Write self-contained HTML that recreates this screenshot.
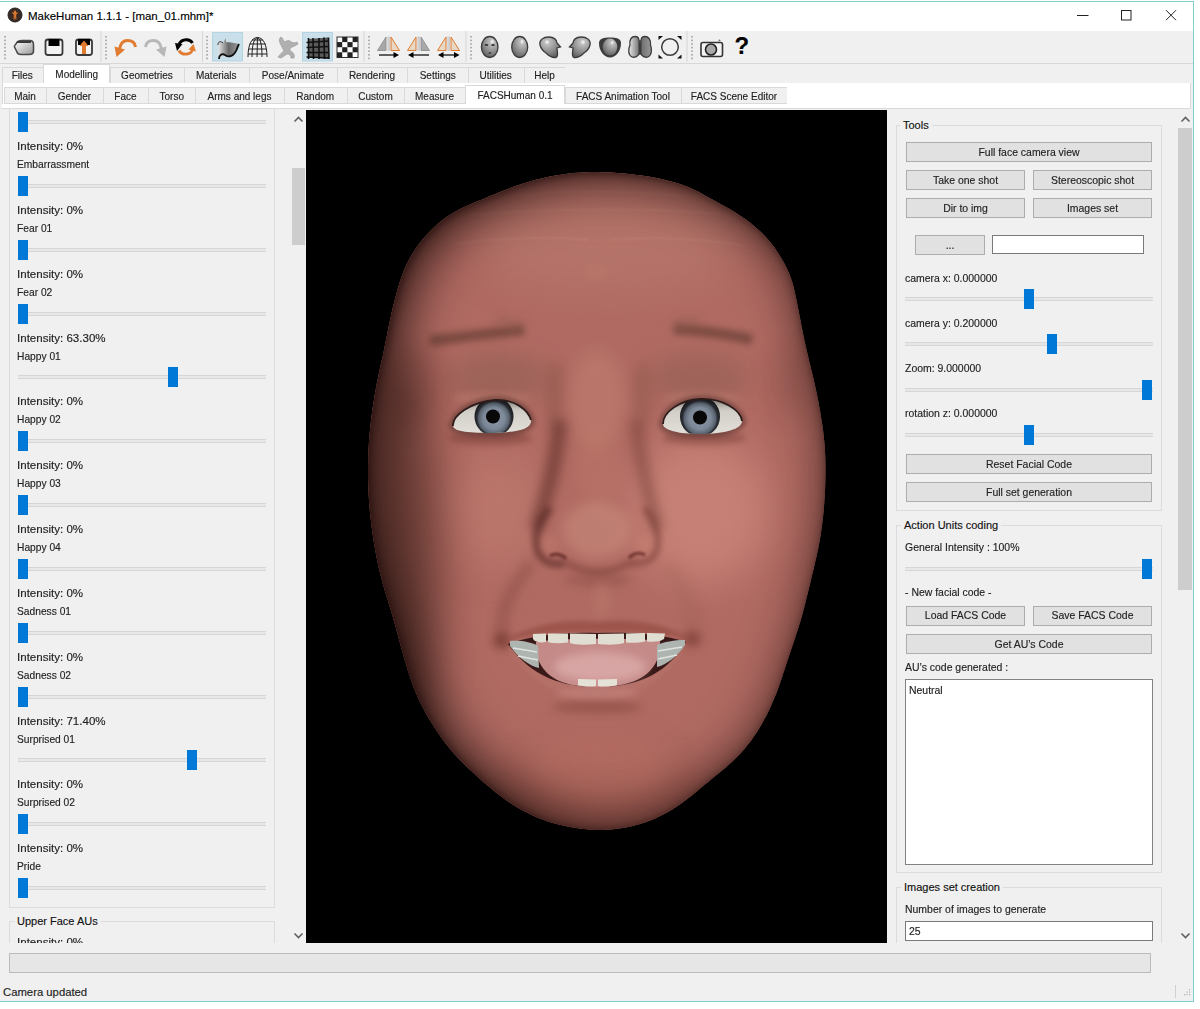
<!DOCTYPE html><html><head><meta charset="utf-8"><style>
html,body{margin:0;padding:0;}
body{width:1200px;height:1009px;position:relative;overflow:hidden;background:#fff;font-family:"Liberation Sans",sans-serif;}
.t{position:absolute;white-space:nowrap;line-height:1;font-family:"Liberation Sans",sans-serif;color:#111;-webkit-text-stroke:0.15px currentColor;}
.b{position:absolute;}
</style></head><body>
<div class="b" style="left:0px;top:1px;width:1194px;height:1001px;background:#f0f0f0;"></div>
<div class="b" style="left:0px;top:1px;width:1194px;height:30px;background:#fff;"></div>
<svg class="b" style="left:7px;top:7px" width="16" height="16"><circle cx="8" cy="8" r="7" fill="#3a2a24" stroke="#222" stroke-width="1"/><path d="M8 3.5 C9.2 3.5 9.4 4.8 9 5.6 L10.8 5.4 L10.6 6.6 L9.2 7.4 L9.4 12.5 L8.4 12.5 L8 9.5 L7.6 12.5 L6.6 12.5 L6.8 7.4 L5.4 6.6 L5.2 5.4 L7 5.6 C6.6 4.8 6.8 3.5 8 3.5 Z" fill="#d8782e"/></svg>
<div class="t" style="left:28px;top:10.5px;font-size:11.5px;color:#000;">MakeHuman 1.1.1 - [man_01.mhm]*</div>
<div class="b" style="left:0px;top:31px;width:1194px;height:32px;background:#f0f0f0;"></div>
<div class="b" style="left:0px;top:63px;width:1194px;height:1px;background:#d8d8d8;"></div>
<div class="b" style="left:0px;top:64px;width:1194px;height:22px;background:#f0f0f0;"></div>
<div class="b" style="left:2px;top:67px;width:40.5px;height:17px;background:#f0f0f0;border:1px solid #d9d9d9;border-right:none;box-sizing:border-box;"></div>
<div class="t" style="left:2px;width:40.5px;text-align:center;top:70.4px;font-size:11px;color:#222;transform:scaleX(0.91);transform-origin:50% 0;">Files</div>
<div class="b" style="left:42.5px;top:64px;width:67.5px;height:22px;background:#fff;border:1px solid #d9d9d9;border-bottom:none;box-sizing:border-box;"></div>
<div class="t" style="left:42.5px;width:67.5px;text-align:center;top:69.4px;font-size:11px;color:#222;transform:scaleX(0.91);transform-origin:50% 0;">Modelling</div>
<div class="b" style="left:110px;top:67px;width:74px;height:17px;background:#f0f0f0;border:1px solid #d9d9d9;border-right:none;box-sizing:border-box;"></div>
<div class="t" style="left:110px;width:74px;text-align:center;top:70.4px;font-size:11px;color:#222;transform:scaleX(0.91);transform-origin:50% 0;">Geometries</div>
<div class="b" style="left:184px;top:67px;width:64.5px;height:17px;background:#f0f0f0;border:1px solid #d9d9d9;border-right:none;box-sizing:border-box;"></div>
<div class="t" style="left:184px;width:64.5px;text-align:center;top:70.4px;font-size:11px;color:#222;transform:scaleX(0.91);transform-origin:50% 0;">Materials</div>
<div class="b" style="left:248.5px;top:67px;width:88.0px;height:17px;background:#f0f0f0;border:1px solid #d9d9d9;border-right:none;box-sizing:border-box;"></div>
<div class="t" style="left:248.5px;width:88.0px;text-align:center;top:70.4px;font-size:11px;color:#222;transform:scaleX(0.91);transform-origin:50% 0;">Pose/Animate</div>
<div class="b" style="left:336.5px;top:67px;width:70.0px;height:17px;background:#f0f0f0;border:1px solid #d9d9d9;border-right:none;box-sizing:border-box;"></div>
<div class="t" style="left:336.5px;width:70.0px;text-align:center;top:70.4px;font-size:11px;color:#222;transform:scaleX(0.91);transform-origin:50% 0;">Rendering</div>
<div class="b" style="left:406.5px;top:67px;width:61.5px;height:17px;background:#f0f0f0;border:1px solid #d9d9d9;border-right:none;box-sizing:border-box;"></div>
<div class="t" style="left:406.5px;width:61.5px;text-align:center;top:70.4px;font-size:11px;color:#222;transform:scaleX(0.91);transform-origin:50% 0;">Settings</div>
<div class="b" style="left:468px;top:67px;width:55.5px;height:17px;background:#f0f0f0;border:1px solid #d9d9d9;border-right:none;box-sizing:border-box;"></div>
<div class="t" style="left:468px;width:55.5px;text-align:center;top:70.4px;font-size:11px;color:#222;transform:scaleX(0.91);transform-origin:50% 0;">Utilities</div>
<div class="b" style="left:523.5px;top:67px;width:41.0px;height:17px;background:#f0f0f0;border:1px solid #d9d9d9;border-right:none;box-sizing:border-box;"></div>
<div class="t" style="left:523.5px;width:41.0px;text-align:center;top:70.4px;font-size:11px;color:#222;transform:scaleX(0.91);transform-origin:50% 0;">Help</div>
<div class="b" style="left:2px;top:84px;width:1189px;height:2px;background:#fff;"></div>
<div class="b" style="left:564px;top:83px;width:627px;height:1px;background:#d9d9d9;"></div>
<div class="b" style="left:2px;top:83px;width:1189px;height:26px;background:#fff;border:1px solid #d9d9d9;border-top:none;border-bottom:none;box-sizing:border-box;"></div>
<div class="b" style="left:3.5px;top:87px;width:42.0px;height:17px;background:#f0f0f0;border:1px solid #d9d9d9;border-right:none;box-sizing:border-box;"></div>
<div class="t" style="left:3.5px;width:42.0px;text-align:center;top:90.9px;font-size:11px;color:#222;transform:scaleX(0.91);transform-origin:50% 0;">Main</div>
<div class="b" style="left:45.5px;top:87px;width:57.0px;height:17px;background:#f0f0f0;border:1px solid #d9d9d9;border-right:none;box-sizing:border-box;"></div>
<div class="t" style="left:45.5px;width:57.0px;text-align:center;top:90.9px;font-size:11px;color:#222;transform:scaleX(0.91);transform-origin:50% 0;">Gender</div>
<div class="b" style="left:102.5px;top:87px;width:45.0px;height:17px;background:#f0f0f0;border:1px solid #d9d9d9;border-right:none;box-sizing:border-box;"></div>
<div class="t" style="left:102.5px;width:45.0px;text-align:center;top:90.9px;font-size:11px;color:#222;transform:scaleX(0.91);transform-origin:50% 0;">Face</div>
<div class="b" style="left:147.5px;top:87px;width:47.5px;height:17px;background:#f0f0f0;border:1px solid #d9d9d9;border-right:none;box-sizing:border-box;"></div>
<div class="t" style="left:147.5px;width:47.5px;text-align:center;top:90.9px;font-size:11px;color:#222;transform:scaleX(0.91);transform-origin:50% 0;">Torso</div>
<div class="b" style="left:195px;top:87px;width:89px;height:17px;background:#f0f0f0;border:1px solid #d9d9d9;border-right:none;box-sizing:border-box;"></div>
<div class="t" style="left:195px;width:89px;text-align:center;top:90.9px;font-size:11px;color:#222;transform:scaleX(0.91);transform-origin:50% 0;">Arms and legs</div>
<div class="b" style="left:284px;top:87px;width:62.5px;height:17px;background:#f0f0f0;border:1px solid #d9d9d9;border-right:none;box-sizing:border-box;"></div>
<div class="t" style="left:284px;width:62.5px;text-align:center;top:90.9px;font-size:11px;color:#222;transform:scaleX(0.91);transform-origin:50% 0;">Random</div>
<div class="b" style="left:346.5px;top:87px;width:57.0px;height:17px;background:#f0f0f0;border:1px solid #d9d9d9;border-right:none;box-sizing:border-box;"></div>
<div class="t" style="left:346.5px;width:57.0px;text-align:center;top:90.9px;font-size:11px;color:#222;transform:scaleX(0.91);transform-origin:50% 0;">Custom</div>
<div class="b" style="left:403.5px;top:87px;width:61.0px;height:17px;background:#f0f0f0;border:1px solid #d9d9d9;border-right:none;box-sizing:border-box;"></div>
<div class="t" style="left:403.5px;width:61.0px;text-align:center;top:90.9px;font-size:11px;color:#222;transform:scaleX(0.91);transform-origin:50% 0;">Measure</div>
<div class="b" style="left:464.5px;top:85px;width:100.0px;height:23px;background:#fff;border:1px solid #d9d9d9;border-bottom:none;box-sizing:border-box;"></div>
<div class="t" style="left:464.5px;width:100.0px;text-align:center;top:90.4px;font-size:11px;color:#222;transform:scaleX(0.91);transform-origin:50% 0;">FACSHuman 0.1</div>
<div class="b" style="left:564.5px;top:87px;width:116.0px;height:17px;background:#f0f0f0;border:1px solid #d9d9d9;border-right:none;box-sizing:border-box;"></div>
<div class="t" style="left:564.5px;width:116.0px;text-align:center;top:90.9px;font-size:11px;color:#222;transform:scaleX(0.91);transform-origin:50% 0;">FACS Animation Tool</div>
<div class="b" style="left:680.5px;top:87px;width:106.0px;height:17px;background:#f0f0f0;border:1px solid #d9d9d9;border-right:none;box-sizing:border-box;"></div>
<div class="t" style="left:680.5px;width:106.0px;text-align:center;top:90.9px;font-size:11px;color:#222;transform:scaleX(0.91);transform-origin:50% 0;">FACS Scene Editor</div>
<div class="b" style="left:2px;top:108px;width:1189px;height:1px;background:#d9d9d9;"></div>
<div class="b" style="left:0px;top:109px;width:1193px;height:892px;background:#f0f0f0;"></div>
<div class="b" style="left:0;top:109px;width:306px;height:834px;overflow:hidden;">
<div class="b" style="left:9px;top:-49px;width:266px;height:848px;border:1px solid #dcdcdc;box-sizing:border-box;"></div>
<div class="b" style="left:18px;top:11px;width:248px;height:4px;background:#e7e7e7;border-top:1px solid #d6d6d6;border-bottom:1px solid #d6d6d6;box-sizing:border-box;"></div>
<div class="b" style="left:18px;top:3px;width:10px;height:20px;background:#0078d7;"></div>
<div class="t" style="left:17px;top:31.9px;font-size:11px;color:#222;transform:scaleX(1.05);transform-origin:0 0;">Intensity: 0%</div>
<div class="t" style="left:17px;top:49.9px;font-size:11px;color:#222;transform:scaleX(0.93);transform-origin:0 0;">Embarrassment</div>
<div class="b" style="left:18px;top:75px;width:248px;height:4px;background:#e7e7e7;border-top:1px solid #d6d6d6;border-bottom:1px solid #d6d6d6;box-sizing:border-box;"></div>
<div class="b" style="left:18px;top:67px;width:10px;height:20px;background:#0078d7;"></div>
<div class="t" style="left:17px;top:95.9px;font-size:11px;color:#222;transform:scaleX(1.05);transform-origin:0 0;">Intensity: 0%</div>
<div class="t" style="left:17px;top:113.9px;font-size:11px;color:#222;transform:scaleX(0.93);transform-origin:0 0;">Fear 01</div>
<div class="b" style="left:18px;top:139px;width:248px;height:4px;background:#e7e7e7;border-top:1px solid #d6d6d6;border-bottom:1px solid #d6d6d6;box-sizing:border-box;"></div>
<div class="b" style="left:18px;top:131px;width:10px;height:20px;background:#0078d7;"></div>
<div class="t" style="left:17px;top:159.9px;font-size:11px;color:#222;transform:scaleX(1.05);transform-origin:0 0;">Intensity: 0%</div>
<div class="t" style="left:17px;top:177.9px;font-size:11px;color:#222;transform:scaleX(0.93);transform-origin:0 0;">Fear 02</div>
<div class="b" style="left:18px;top:203px;width:248px;height:4px;background:#e7e7e7;border-top:1px solid #d6d6d6;border-bottom:1px solid #d6d6d6;box-sizing:border-box;"></div>
<div class="b" style="left:18px;top:195px;width:10px;height:20px;background:#0078d7;"></div>
<div class="t" style="left:17px;top:223.9px;font-size:11px;color:#222;transform:scaleX(1.05);transform-origin:0 0;">Intensity: 63.30%</div>
<div class="t" style="left:17px;top:241.9px;font-size:11px;color:#222;transform:scaleX(0.93);transform-origin:0 0;">Happy 01</div>
<div class="b" style="left:18px;top:266px;width:248px;height:4px;background:#e7e7e7;border-top:1px solid #d6d6d6;border-bottom:1px solid #d6d6d6;box-sizing:border-box;"></div>
<div class="b" style="left:168px;top:258px;width:10px;height:20px;background:#0078d7;"></div>
<div class="t" style="left:17px;top:286.9px;font-size:11px;color:#222;transform:scaleX(1.05);transform-origin:0 0;">Intensity: 0%</div>
<div class="t" style="left:17px;top:304.9px;font-size:11px;color:#222;transform:scaleX(0.93);transform-origin:0 0;">Happy 02</div>
<div class="b" style="left:18px;top:330px;width:248px;height:4px;background:#e7e7e7;border-top:1px solid #d6d6d6;border-bottom:1px solid #d6d6d6;box-sizing:border-box;"></div>
<div class="b" style="left:18px;top:322px;width:10px;height:20px;background:#0078d7;"></div>
<div class="t" style="left:17px;top:350.9px;font-size:11px;color:#222;transform:scaleX(1.05);transform-origin:0 0;">Intensity: 0%</div>
<div class="t" style="left:17px;top:368.9px;font-size:11px;color:#222;transform:scaleX(0.93);transform-origin:0 0;">Happy 03</div>
<div class="b" style="left:18px;top:394px;width:248px;height:4px;background:#e7e7e7;border-top:1px solid #d6d6d6;border-bottom:1px solid #d6d6d6;box-sizing:border-box;"></div>
<div class="b" style="left:18px;top:386px;width:10px;height:20px;background:#0078d7;"></div>
<div class="t" style="left:17px;top:414.9px;font-size:11px;color:#222;transform:scaleX(1.05);transform-origin:0 0;">Intensity: 0%</div>
<div class="t" style="left:17px;top:432.9px;font-size:11px;color:#222;transform:scaleX(0.93);transform-origin:0 0;">Happy 04</div>
<div class="b" style="left:18px;top:458px;width:248px;height:4px;background:#e7e7e7;border-top:1px solid #d6d6d6;border-bottom:1px solid #d6d6d6;box-sizing:border-box;"></div>
<div class="b" style="left:18px;top:450px;width:10px;height:20px;background:#0078d7;"></div>
<div class="t" style="left:17px;top:478.9px;font-size:11px;color:#222;transform:scaleX(1.05);transform-origin:0 0;">Intensity: 0%</div>
<div class="t" style="left:17px;top:496.9px;font-size:11px;color:#222;transform:scaleX(0.93);transform-origin:0 0;">Sadness 01</div>
<div class="b" style="left:18px;top:522px;width:248px;height:4px;background:#e7e7e7;border-top:1px solid #d6d6d6;border-bottom:1px solid #d6d6d6;box-sizing:border-box;"></div>
<div class="b" style="left:18px;top:514px;width:10px;height:20px;background:#0078d7;"></div>
<div class="t" style="left:17px;top:542.9px;font-size:11px;color:#222;transform:scaleX(1.05);transform-origin:0 0;">Intensity: 0%</div>
<div class="t" style="left:17px;top:560.9px;font-size:11px;color:#222;transform:scaleX(0.93);transform-origin:0 0;">Sadness 02</div>
<div class="b" style="left:18px;top:586px;width:248px;height:4px;background:#e7e7e7;border-top:1px solid #d6d6d6;border-bottom:1px solid #d6d6d6;box-sizing:border-box;"></div>
<div class="b" style="left:18px;top:578px;width:10px;height:20px;background:#0078d7;"></div>
<div class="t" style="left:17px;top:606.9px;font-size:11px;color:#222;transform:scaleX(1.05);transform-origin:0 0;">Intensity: 71.40%</div>
<div class="t" style="left:17px;top:624.9px;font-size:11px;color:#222;transform:scaleX(0.93);transform-origin:0 0;">Surprised 01</div>
<div class="b" style="left:18px;top:649px;width:248px;height:4px;background:#e7e7e7;border-top:1px solid #d6d6d6;border-bottom:1px solid #d6d6d6;box-sizing:border-box;"></div>
<div class="b" style="left:187px;top:641px;width:10px;height:20px;background:#0078d7;"></div>
<div class="t" style="left:17px;top:669.9px;font-size:11px;color:#222;transform:scaleX(1.05);transform-origin:0 0;">Intensity: 0%</div>
<div class="t" style="left:17px;top:687.9px;font-size:11px;color:#222;transform:scaleX(0.93);transform-origin:0 0;">Surprised 02</div>
<div class="b" style="left:18px;top:713px;width:248px;height:4px;background:#e7e7e7;border-top:1px solid #d6d6d6;border-bottom:1px solid #d6d6d6;box-sizing:border-box;"></div>
<div class="b" style="left:18px;top:705px;width:10px;height:20px;background:#0078d7;"></div>
<div class="t" style="left:17px;top:733.9px;font-size:11px;color:#222;transform:scaleX(1.05);transform-origin:0 0;">Intensity: 0%</div>
<div class="t" style="left:17px;top:751.9px;font-size:11px;color:#222;transform:scaleX(0.93);transform-origin:0 0;">Pride</div>
<div class="b" style="left:18px;top:777px;width:248px;height:4px;background:#e7e7e7;border-top:1px solid #d6d6d6;border-bottom:1px solid #d6d6d6;box-sizing:border-box;"></div>
<div class="b" style="left:18px;top:769px;width:10px;height:20px;background:#0078d7;"></div>
<div class="b" style="left:9px;top:812px;width:266px;height:39px;border:1px solid #dcdcdc;box-sizing:border-box;"></div>
<div class="t" style="left:14px;top:807px;font-size:11px;padding:0 3px;background:#f0f0f0;">Upper Face AUs</div>
<div class="t" style="left:17px;top:827.9px;font-size:11px;color:#222;transform:scaleX(1.05);transform-origin:0 0;">Intensity: 0%</div>
<div class="b" style="left:291px;top:1px;width:15px;height:833px;background:#f0f0f0;"></div>
<div class="b" style="left:292px;top:59px;width:13px;height:77px;background:#cdcdcd;"></div>
<svg class="b" style="left:293px;top:6px" width="11" height="9"><path d="M1.5 6.5 L5.5 2.5 L9.5 6.5" fill="none" stroke="#606060" stroke-width="1.6"/></svg>
<svg class="b" style="left:293px;top:822px" width="11" height="9"><path d="M1.5 2.5 L5.5 6.5 L9.5 2.5" fill="none" stroke="#606060" stroke-width="1.6"/></svg>
</div>
<div class="b" style="left:2px;top:104px;width:1188px;height:4px;background:#fff;"></div>
<div class="b" style="left:1px;top:108px;width:1190px;height:1px;background:#dadada;"></div>
<div class="b" style="left:306px;top:110px;width:581px;height:833px;background:#000;"></div>
<svg class="b" style="left:306px;top:110px" width="581" height="833" viewBox="306 110 581 833">
<defs>
<clipPath id="fc"><path d="M592.0 172.1 L587.0 172.2 L582.0 172.4 L577.0 172.7 L572.1 173.1 L567.1 173.7 L562.2 174.4 L557.2 175.2 L552.3 176.1 L547.4 177.1 L542.6 178.2 L537.7 179.3 L532.9 180.6 L528.1 182.0 L523.3 183.4 L518.5 185.0 L513.8 186.6 L509.1 188.4 L504.5 190.2 L499.8 192.0 L495.2 193.9 L490.6 195.8 L486.0 197.8 L481.4 199.7 L476.7 201.6 L472.1 203.6 L467.6 205.5 L463.0 207.6 L458.6 209.8 L454.2 212.2 L450.0 214.8 L445.8 217.5 L441.8 220.5 L438.0 223.6 L434.3 226.9 L430.7 230.4 L427.3 234.0 L424.0 237.7 L420.8 241.6 L417.8 245.5 L415.0 249.6 L412.3 253.8 L409.8 258.1 L407.5 262.5 L405.4 267.0 L403.5 271.6 L401.8 276.3 L400.1 281.0 L398.6 285.8 L397.2 290.6 L395.9 295.4 L394.6 300.2 L393.4 305.1 L392.2 309.9 L391.1 314.8 L390.1 319.7 L389.0 324.6 L388.0 329.5 L387.1 334.4 L386.1 339.3 L385.1 344.2 L384.1 349.1 L383.1 354.0 L382.0 358.9 L380.9 363.7 L379.9 368.6 L378.8 373.5 L377.8 378.4 L376.8 383.3 L375.9 388.2 L375.0 393.1 L374.2 398.1 L373.4 403.0 L372.6 408.0 L371.9 412.9 L371.3 417.9 L370.7 422.8 L370.2 427.8 L369.7 432.8 L369.2 437.8 L368.9 442.7 L368.6 447.7 L368.3 452.7 L368.2 457.7 L368.1 462.7 L368.0 467.7 L368.0 472.7 L368.0 477.7 L368.2 482.7 L368.3 487.7 L368.5 492.7 L368.8 497.7 L369.1 502.7 L369.5 507.7 L370.0 512.6 L370.5 517.6 L371.1 522.6 L371.7 527.5 L372.4 532.5 L373.1 537.4 L373.9 542.4 L374.7 547.3 L375.6 552.2 L376.5 557.1 L377.5 562.0 L378.5 566.9 L379.7 571.8 L380.9 576.6 L382.2 581.5 L383.5 586.3 L384.9 591.1 L386.4 595.9 L387.9 600.6 L389.3 605.4 L390.8 610.2 L392.2 615.0 L393.6 619.8 L395.0 624.6 L396.3 629.4 L397.6 634.3 L398.9 639.1 L400.2 643.9 L401.5 648.7 L402.9 653.6 L404.2 658.4 L405.7 663.1 L407.1 667.9 L408.6 672.7 L410.2 677.4 L411.8 682.2 L413.5 686.9 L415.3 691.5 L417.3 696.1 L419.3 700.7 L421.5 705.1 L423.8 709.6 L426.2 714.0 L428.7 718.3 L431.3 722.6 L433.9 726.8 L436.7 731.0 L439.5 735.1 L442.4 739.2 L445.3 743.2 L448.4 747.1 L451.6 750.9 L454.9 754.7 L458.3 758.3 L461.8 761.9 L465.4 765.4 L469.0 768.9 L472.6 772.3 L476.3 775.7 L480.0 779.1 L483.7 782.4 L487.5 785.6 L491.3 788.8 L495.2 792.0 L499.2 795.0 L503.2 798.0 L507.2 800.9 L511.4 803.7 L515.6 806.4 L519.9 808.9 L524.2 811.3 L528.7 813.6 L533.2 815.8 L537.7 817.8 L542.4 819.6 L547.1 821.3 L551.8 822.8 L556.6 824.1 L561.5 825.3 L566.3 826.3 L571.2 827.3 L576.2 828.1 L581.1 828.7 L586.1 829.3 L591.0 829.7 L596.0 829.9 L601.0 829.9 L606.0 829.8 L610.9 829.5 L615.9 829.0 L620.8 828.3 L625.7 827.5 L630.6 826.5 L635.5 825.3 L640.2 824.0 L645.0 822.4 L649.7 820.7 L654.3 818.9 L658.8 816.8 L663.3 814.6 L667.6 812.2 L671.9 809.7 L676.1 807.0 L680.3 804.2 L684.3 801.3 L688.3 798.3 L692.2 795.2 L696.1 792.0 L699.9 788.8 L703.7 785.6 L707.6 782.4 L711.4 779.2 L715.3 776.1 L719.2 772.9 L723.1 769.8 L726.9 766.6 L730.6 763.3 L734.2 759.8 L737.8 756.3 L741.2 752.7 L744.5 748.9 L747.6 745.1 L750.7 741.2 L753.6 737.1 L756.4 733.0 L759.1 728.8 L761.6 724.5 L764.0 720.1 L766.4 715.7 L768.6 711.2 L770.7 706.7 L772.7 702.1 L774.6 697.5 L776.5 692.9 L778.3 688.2 L779.9 683.5 L781.6 678.8 L783.1 674.0 L784.7 669.3 L786.2 664.5 L787.8 659.8 L789.4 655.0 L791.0 650.3 L792.6 645.6 L794.2 640.8 L795.7 636.1 L797.3 631.3 L798.8 626.6 L800.3 621.8 L801.7 617.0 L803.0 612.2 L804.3 607.3 L805.5 602.5 L806.7 597.6 L807.9 592.8 L809.1 587.9 L810.3 583.0 L811.4 578.2 L812.6 573.3 L813.8 568.5 L814.9 563.6 L816.0 558.7 L817.1 553.8 L818.2 549.0 L819.1 544.0 L820.0 539.1 L820.8 534.2 L821.5 529.3 L822.2 524.3 L822.8 519.3 L823.3 514.4 L823.8 509.4 L824.2 504.4 L824.5 499.4 L824.8 494.4 L825.1 489.4 L825.3 484.4 L825.4 479.4 L825.5 474.4 L825.5 469.4 L825.5 464.4 L825.4 459.5 L825.2 454.5 L824.9 449.5 L824.6 444.5 L824.1 439.5 L823.6 434.5 L823.0 429.6 L822.3 424.6 L821.5 419.7 L820.7 414.8 L819.9 409.8 L819.0 404.9 L818.1 400.0 L817.1 395.1 L816.1 390.2 L815.0 385.3 L813.9 380.4 L812.8 375.6 L811.6 370.7 L810.4 365.8 L809.2 361.0 L808.1 356.1 L806.9 351.3 L805.8 346.4 L804.7 341.5 L803.7 336.6 L802.7 331.7 L801.7 326.8 L800.8 321.9 L799.8 317.0 L798.9 312.1 L797.9 307.2 L797.0 302.3 L796.0 297.4 L794.9 292.5 L793.8 287.6 L792.5 282.8 L790.9 278.1 L789.2 273.5 L787.2 269.0 L785.0 264.5 L782.6 260.2 L780.0 255.9 L777.3 251.7 L774.5 247.6 L771.5 243.7 L768.3 239.8 L765.0 236.1 L761.5 232.6 L757.9 229.2 L754.1 225.9 L750.3 222.8 L746.3 219.8 L742.2 216.9 L738.0 214.2 L733.8 211.5 L729.5 209.0 L725.1 206.6 L720.8 204.2 L716.4 201.8 L712.0 199.3 L707.7 196.9 L703.3 194.5 L699.0 192.1 L694.5 189.9 L690.0 187.8 L685.4 186.0 L680.7 184.3 L676.0 182.8 L671.2 181.5 L666.3 180.2 L661.5 179.1 L656.6 178.1 L651.7 177.1 L646.8 176.3 L641.8 175.5 L636.9 174.9 L631.9 174.3 L626.9 173.7 L621.9 173.3 L617.0 172.9 L612.0 172.6 L607.0 172.3 L602.0 172.2 L597.0 172.1 Z"/></clipPath>
<filter id="b1" color-interpolation-filters="sRGB" filterUnits="userSpaceOnUse" x="306" y="110" width="581" height="833"><feGaussianBlur stdDeviation="1"/></filter>
<filter id="b2" color-interpolation-filters="sRGB" filterUnits="userSpaceOnUse" x="306" y="110" width="581" height="833"><feGaussianBlur stdDeviation="2"/></filter>
<filter id="b3" color-interpolation-filters="sRGB" filterUnits="userSpaceOnUse" x="306" y="110" width="581" height="833"><feGaussianBlur stdDeviation="3"/></filter>
<filter id="b4" color-interpolation-filters="sRGB" filterUnits="userSpaceOnUse" x="306" y="110" width="581" height="833"><feGaussianBlur stdDeviation="4"/></filter>
<filter id="b6" color-interpolation-filters="sRGB" filterUnits="userSpaceOnUse" x="306" y="110" width="581" height="833"><feGaussianBlur stdDeviation="6"/></filter>
<filter id="b8" color-interpolation-filters="sRGB" filterUnits="userSpaceOnUse" x="306" y="110" width="581" height="833"><feGaussianBlur stdDeviation="8"/></filter>
<filter id="b12" color-interpolation-filters="sRGB" filterUnits="userSpaceOnUse" x="306" y="110" width="581" height="833"><feGaussianBlur stdDeviation="12"/></filter>
<filter id="b20" color-interpolation-filters="sRGB" filterUnits="userSpaceOnUse" x="306" y="110" width="581" height="833"><feGaussianBlur stdDeviation="20"/></filter>
<filter id="inner1" color-interpolation-filters="sRGB" x="-10%" y="-10%" width="120%" height="120%">
 <feGaussianBlur in="SourceAlpha" stdDeviation="28" result="bl"/>
 <feOffset in="bl" dx="10" dy="3" result="off"/>
 <feComposite in="SourceAlpha" in2="off" operator="out" result="edge"/>
 <feFlood flood-color="#1a0a08" flood-opacity="1"/>
 <feComposite in2="edge" operator="in"/>
</filter>
<filter id="inner2" color-interpolation-filters="sRGB" x="-10%" y="-10%" width="120%" height="120%">
 <feGaussianBlur in="SourceAlpha" stdDeviation="5" result="bl"/>
 <feOffset in="bl" dx="2" dy="1" result="off"/>
 <feComposite in="SourceAlpha" in2="off" operator="out" result="edge"/>
 <feFlood flood-color="#1e0c0a" flood-opacity="0.7"/>
 <feComposite in2="edge" operator="in"/>
</filter>
<radialGradient id="iris" cx="0.5" cy="0.55" r="0.5">
<stop offset="0" stop-color="#8e9aa8"/><stop offset="0.55" stop-color="#7c8898"/><stop offset="0.78" stop-color="#5a6470"/><stop offset="0.88" stop-color="#2a2e34"/><stop offset="1" stop-color="#1c1e22"/>
</radialGradient>
<linearGradient id="scl" x1="0" y1="0" x2="0" y2="1"><stop offset="0" stop-color="#9a948e"/><stop offset="0.35" stop-color="#d2cec8"/><stop offset="1" stop-color="#e2ded8"/></linearGradient>
</defs>
<g clip-path="url(#fc)">
<rect x="306" y="110" width="581" height="833" fill="#b06a62"/>
<!-- forehead -->
<ellipse cx="610" cy="235" rx="140" ry="55" fill="#b87a6e" opacity="0.6" filter="url(#b20)"/>
<!-- cheeks -->
<ellipse cx="700" cy="510" rx="70" ry="75" fill="#d08a7e" opacity="0.7" filter="url(#b20)"/>
<ellipse cx="498" cy="510" rx="48" ry="58" fill="#c27e72" opacity="0.6" filter="url(#b20)"/>
<!-- left side darker -->
<ellipse cx="400" cy="560" rx="42" ry="190" fill="#2a140e" opacity="0.45" filter="url(#b20)"/>
<!-- jaw -->
<ellipse cx="597" cy="805" rx="160" ry="40" fill="#7a4034" opacity="0.3" filter="url(#b20)"/>
<!-- chin light -->
<ellipse cx="600" cy="765" rx="70" ry="35" fill="#b87064" opacity="0.5" filter="url(#b12)"/>
<!-- wrinkles -->
<g fill="none" stroke="#d8a090" stroke-width="1.5" opacity="0.25" filter="url(#b1)">
<path d="M520 196 C560 190 630 190 680 196"/>
<path d="M470 215 C540 208 650 208 720 214"/>
<path d="M455 244 C500 238 560 236 590 240"/><path d="M610 240 C650 236 700 238 745 246"/>
</g>
<!-- temples -->
<ellipse cx="412" cy="385" rx="26" ry="40" fill="#3a1c16" opacity="0.2" filter="url(#b12)"/>
<ellipse cx="788" cy="385" rx="20" ry="35" fill="#3a1c16" opacity="0.1" filter="url(#b12)"/>
<!-- brows -->
<path d="M430 341 C460 337 495 333 524 330" stroke="#6a4036" stroke-width="11" fill="none" opacity="0.7" filter="url(#b3)"/>
<path d="M495 322 C505 320 515 322 525 326" stroke="#8a5a4e" stroke-width="8" fill="none" opacity="0.4" filter="url(#b4)"/>
<path d="M674 329 C705 331 730 334 752 340" stroke="#6a4036" stroke-width="11" fill="none" opacity="0.7" filter="url(#b3)"/>
<path d="M672 326 C682 321 692 320 700 322" stroke="#8a5a4e" stroke-width="8" fill="none" opacity="0.4" filter="url(#b4)"/>
<!-- glabella bump light -->
<ellipse cx="596" cy="272" rx="14" ry="7" fill="#c08070" opacity="0.25" filter="url(#b3)"/>
<!-- eye socket shading -->
<ellipse cx="498" cy="378" rx="52" ry="24" fill="#80584a" opacity="0.4" filter="url(#b12)"/>
<ellipse cx="699" cy="378" rx="52" ry="24" fill="#80584a" opacity="0.37" filter="url(#b12)"/>
<ellipse cx="555" cy="395" rx="10" ry="35" fill="#8a5548" opacity="0.45" filter="url(#b6)"/>
<ellipse cx="642" cy="395" rx="10" ry="35" fill="#8a5548" opacity="0.4" filter="url(#b6)"/>
<ellipse cx="597" cy="400" rx="28" ry="50" fill="#c48474" opacity="0.45" filter="url(#b8)"/>
<ellipse cx="492" cy="398" rx="40" ry="6" fill="#c08070" opacity="0.4" filter="url(#b3)"/>
<ellipse cx="702" cy="398" rx="40" ry="6" fill="#c08070" opacity="0.4" filter="url(#b3)"/>
<ellipse cx="490" cy="438" rx="42" ry="7" fill="#7a4038" opacity="0.55" filter="url(#b3)"/>
<ellipse cx="704" cy="438" rx="42" ry="7" fill="#7a4038" opacity="0.5" filter="url(#b3)"/>
<!-- nose -->
<path d="M560 420 C556 465 546 500 536 530" stroke="#5e2e28" stroke-width="14" fill="none" opacity="0.65" filter="url(#b6)"/>
<path d="M636 420 C640 465 650 500 658 530" stroke="#6e3a32" stroke-width="12" fill="none" opacity="0.5" filter="url(#b6)"/>
<ellipse cx="597" cy="470" rx="22" ry="45" fill="#c07a6a" opacity="0.35" filter="url(#b8)"/>
<ellipse cx="597" cy="530" rx="34" ry="28" fill="#c88a7c" opacity="0.6" filter="url(#b6)"/>
<!-- wing outlines -->
<path d="M550 508 C536 522 532 545 541 557 C548 564 557 565 565 563" stroke="#5a2a26" stroke-width="7" fill="none" opacity="0.7" filter="url(#b3)"/>
<path d="M644 508 C658 522 662 545 653 557 C646 564 637 564 629 562" stroke="#6a322c" stroke-width="6" fill="none" opacity="0.55" filter="url(#b3)"/>
<!-- wing highlights -->
<ellipse cx="551" cy="545" rx="9" ry="10" fill="#c07a6c" opacity="0.4" filter="url(#b3)"/>
<ellipse cx="643" cy="545" rx="9" ry="10" fill="#c88272" opacity="0.4" filter="url(#b3)"/>
<!-- under tip shadow -->
<path d="M566 562 C578 570 588 572 598 572 C608 572 618 570 630 562" stroke="#6a342e" stroke-width="6" fill="none" opacity="0.5" filter="url(#b3)"/>
<path d="M550 556 C555 553 562 554 566 559" stroke="#5a2220" stroke-width="3.5" fill="none" opacity="0.7" filter="url(#b1)"/>
<path d="M645 555 C640 552 633 553 629 558" stroke="#5a2220" stroke-width="3.5" fill="none" opacity="0.65" filter="url(#b1)"/>
<ellipse cx="598" cy="580" rx="34" ry="7" fill="#7a4038" opacity="0.3" filter="url(#b4)"/>
<!-- philtrum -->
<ellipse cx="602" cy="600" rx="8" ry="18" fill="#c08070" opacity="0.35" filter="url(#b4)"/>
<!-- nasolabial -->
<path d="M532 562 C510 588 498 616 502 643" stroke="#6c362e" stroke-width="9" fill="none" opacity="0.4" filter="url(#b6)"/>
<path d="M666 565 C688 590 698 618 693 645" stroke="#7c4238" stroke-width="10" fill="none" opacity="0.22" filter="url(#b8)"/>
<!-- mouth corners -->
<ellipse cx="502" cy="641" rx="9" ry="8" fill="#6a3028" opacity="0.55" filter="url(#b4)"/>
<ellipse cx="692" cy="639" rx="9" ry="8" fill="#6a3028" opacity="0.5" filter="url(#b4)"/>
<!-- upper lip -->
<path d="M502 642 C530 624 570 618 597 622 C625 618 665 622 692 640 C670 634 630 631 597 632 C565 631 530 634 502 642 Z" fill="#9a5248" opacity="0.85" filter="url(#b2)"/>
<!-- lower lip -->
<path d="M505 645 C530 682 565 700 597 701 C630 700 665 682 688 643 C665 676 630 688 597 688 C565 688 530 676 505 645 Z" fill="#b6726a" opacity="0.9" filter="url(#b2)"/>
<ellipse cx="597" cy="694" rx="42" ry="6" fill="#c48680" opacity="0.55" filter="url(#b3)"/>
<ellipse cx="597" cy="707" rx="45" ry="6" fill="#7a4034" opacity="0.45" filter="url(#b4)"/>
<!-- mouth opening -->
<path d="M508 644 C535 634 570 632 597 633 C625 632 660 633 686 642 C664 678 632 687 597 687 C564 687 532 678 508 644 Z" fill="#3a1a18"/>
<path d="M536 642 C560 638 635 638 660 641 C662 660 650 676 632 682 C620 686 610 687 598 687 C585 687 572 686 562 682 C545 676 534 660 536 642 Z" fill="#c48a88"/>
<ellipse cx="600" cy="667" rx="46" ry="15" fill="#dcacaa" opacity="0.8" filter="url(#b4)"/>
<!-- upper teeth -->
<g fill="#e0ded2">
<path d="M533 634 L546 633.5 L546 642 C540 643 535 642 533 639 Z"/>
<path d="M548 633.5 L568 633.5 L568 642.5 C560 643.5 552 643.5 548 642 Z"/>
<path d="M570 633.5 L596 634 L596 644 C585 645 575 645 570 643 Z"/>
<path d="M598 634 L624 633.5 L624 643 C618 645 605 645 598 644 Z"/>
<path d="M626 633.5 L645 633 L645 641.5 C640 643 630 643 626 642.5 Z"/>
<path d="M647 633 L665 633.5 L664 639 C660 642 652 642 647 641.5 Z"/>
</g>
<!-- lower teeth -->
<path d="M578 679 L596 679.5 L596 686 C590 687 582 686.5 578 685 Z" fill="#e4e2d6"/>
<path d="M598 679.5 L617 679 L617 685 C612 686.5 604 687 598 686 Z" fill="#e4e2d6"/>
<!-- side molars -->
<g>
<path d="M510 641 C520 640 532 642 538 646 L539 668 C530 666 518 658 510 646 Z" fill="#aeb4b0"/>
<path d="M513 648 L537 652 M518 656 L538 660" stroke="#e0e4e0" stroke-width="1.6"/>
<path d="M685 640 C675 640 663 642 657 645 L657 667 C666 665 678 656 685 645 Z" fill="#aeb4b0"/>
<path d="M682 647 L658 651 M677 655 L658 659" stroke="#e0e4e0" stroke-width="1.6"/>
</g>
<!-- rim shading -->
<path d="M592.0 172.1 L587.0 172.2 L582.0 172.4 L577.0 172.7 L572.1 173.1 L567.1 173.7 L562.2 174.4 L557.2 175.2 L552.3 176.1 L547.4 177.1 L542.6 178.2 L537.7 179.3 L532.9 180.6 L528.1 182.0 L523.3 183.4 L518.5 185.0 L513.8 186.6 L509.1 188.4 L504.5 190.2 L499.8 192.0 L495.2 193.9 L490.6 195.8 L486.0 197.8 L481.4 199.7 L476.7 201.6 L472.1 203.6 L467.6 205.5 L463.0 207.6 L458.6 209.8 L454.2 212.2 L450.0 214.8 L445.8 217.5 L441.8 220.5 L438.0 223.6 L434.3 226.9 L430.7 230.4 L427.3 234.0 L424.0 237.7 L420.8 241.6 L417.8 245.5 L415.0 249.6 L412.3 253.8 L409.8 258.1 L407.5 262.5 L405.4 267.0 L403.5 271.6 L401.8 276.3 L400.1 281.0 L398.6 285.8 L397.2 290.6 L395.9 295.4 L394.6 300.2 L393.4 305.1 L392.2 309.9 L391.1 314.8 L390.1 319.7 L389.0 324.6 L388.0 329.5 L387.1 334.4 L386.1 339.3 L385.1 344.2 L384.1 349.1 L383.1 354.0 L382.0 358.9 L380.9 363.7 L379.9 368.6 L378.8 373.5 L377.8 378.4 L376.8 383.3 L375.9 388.2 L375.0 393.1 L374.2 398.1 L373.4 403.0 L372.6 408.0 L371.9 412.9 L371.3 417.9 L370.7 422.8 L370.2 427.8 L369.7 432.8 L369.2 437.8 L368.9 442.7 L368.6 447.7 L368.3 452.7 L368.2 457.7 L368.1 462.7 L368.0 467.7 L368.0 472.7 L368.0 477.7 L368.2 482.7 L368.3 487.7 L368.5 492.7 L368.8 497.7 L369.1 502.7 L369.5 507.7 L370.0 512.6 L370.5 517.6 L371.1 522.6 L371.7 527.5 L372.4 532.5 L373.1 537.4 L373.9 542.4 L374.7 547.3 L375.6 552.2 L376.5 557.1 L377.5 562.0 L378.5 566.9 L379.7 571.8 L380.9 576.6 L382.2 581.5 L383.5 586.3 L384.9 591.1 L386.4 595.9 L387.9 600.6 L389.3 605.4 L390.8 610.2 L392.2 615.0 L393.6 619.8 L395.0 624.6 L396.3 629.4 L397.6 634.3 L398.9 639.1 L400.2 643.9 L401.5 648.7 L402.9 653.6 L404.2 658.4 L405.7 663.1 L407.1 667.9 L408.6 672.7 L410.2 677.4 L411.8 682.2 L413.5 686.9 L415.3 691.5 L417.3 696.1 L419.3 700.7 L421.5 705.1 L423.8 709.6 L426.2 714.0 L428.7 718.3 L431.3 722.6 L433.9 726.8 L436.7 731.0 L439.5 735.1 L442.4 739.2 L445.3 743.2 L448.4 747.1 L451.6 750.9 L454.9 754.7 L458.3 758.3 L461.8 761.9 L465.4 765.4 L469.0 768.9 L472.6 772.3 L476.3 775.7 L480.0 779.1 L483.7 782.4 L487.5 785.6 L491.3 788.8 L495.2 792.0 L499.2 795.0 L503.2 798.0 L507.2 800.9 L511.4 803.7 L515.6 806.4 L519.9 808.9 L524.2 811.3 L528.7 813.6 L533.2 815.8 L537.7 817.8 L542.4 819.6 L547.1 821.3 L551.8 822.8 L556.6 824.1 L561.5 825.3 L566.3 826.3 L571.2 827.3 L576.2 828.1 L581.1 828.7 L586.1 829.3 L591.0 829.7 L596.0 829.9 L601.0 829.9 L606.0 829.8 L610.9 829.5 L615.9 829.0 L620.8 828.3 L625.7 827.5 L630.6 826.5 L635.5 825.3 L640.2 824.0 L645.0 822.4 L649.7 820.7 L654.3 818.9 L658.8 816.8 L663.3 814.6 L667.6 812.2 L671.9 809.7 L676.1 807.0 L680.3 804.2 L684.3 801.3 L688.3 798.3 L692.2 795.2 L696.1 792.0 L699.9 788.8 L703.7 785.6 L707.6 782.4 L711.4 779.2 L715.3 776.1 L719.2 772.9 L723.1 769.8 L726.9 766.6 L730.6 763.3 L734.2 759.8 L737.8 756.3 L741.2 752.7 L744.5 748.9 L747.6 745.1 L750.7 741.2 L753.6 737.1 L756.4 733.0 L759.1 728.8 L761.6 724.5 L764.0 720.1 L766.4 715.7 L768.6 711.2 L770.7 706.7 L772.7 702.1 L774.6 697.5 L776.5 692.9 L778.3 688.2 L779.9 683.5 L781.6 678.8 L783.1 674.0 L784.7 669.3 L786.2 664.5 L787.8 659.8 L789.4 655.0 L791.0 650.3 L792.6 645.6 L794.2 640.8 L795.7 636.1 L797.3 631.3 L798.8 626.6 L800.3 621.8 L801.7 617.0 L803.0 612.2 L804.3 607.3 L805.5 602.5 L806.7 597.6 L807.9 592.8 L809.1 587.9 L810.3 583.0 L811.4 578.2 L812.6 573.3 L813.8 568.5 L814.9 563.6 L816.0 558.7 L817.1 553.8 L818.2 549.0 L819.1 544.0 L820.0 539.1 L820.8 534.2 L821.5 529.3 L822.2 524.3 L822.8 519.3 L823.3 514.4 L823.8 509.4 L824.2 504.4 L824.5 499.4 L824.8 494.4 L825.1 489.4 L825.3 484.4 L825.4 479.4 L825.5 474.4 L825.5 469.4 L825.5 464.4 L825.4 459.5 L825.2 454.5 L824.9 449.5 L824.6 444.5 L824.1 439.5 L823.6 434.5 L823.0 429.6 L822.3 424.6 L821.5 419.7 L820.7 414.8 L819.9 409.8 L819.0 404.9 L818.1 400.0 L817.1 395.1 L816.1 390.2 L815.0 385.3 L813.9 380.4 L812.8 375.6 L811.6 370.7 L810.4 365.8 L809.2 361.0 L808.1 356.1 L806.9 351.3 L805.8 346.4 L804.7 341.5 L803.7 336.6 L802.7 331.7 L801.7 326.8 L800.8 321.9 L799.8 317.0 L798.9 312.1 L797.9 307.2 L797.0 302.3 L796.0 297.4 L794.9 292.5 L793.8 287.6 L792.5 282.8 L790.9 278.1 L789.2 273.5 L787.2 269.0 L785.0 264.5 L782.6 260.2 L780.0 255.9 L777.3 251.7 L774.5 247.6 L771.5 243.7 L768.3 239.8 L765.0 236.1 L761.5 232.6 L757.9 229.2 L754.1 225.9 L750.3 222.8 L746.3 219.8 L742.2 216.9 L738.0 214.2 L733.8 211.5 L729.5 209.0 L725.1 206.6 L720.8 204.2 L716.4 201.8 L712.0 199.3 L707.7 196.9 L703.3 194.5 L699.0 192.1 L694.5 189.9 L690.0 187.8 L685.4 186.0 L680.7 184.3 L676.0 182.8 L671.2 181.5 L666.3 180.2 L661.5 179.1 L656.6 178.1 L651.7 177.1 L646.8 176.3 L641.8 175.5 L636.9 174.9 L631.9 174.3 L626.9 173.7 L621.9 173.3 L617.0 172.9 L612.0 172.6 L607.0 172.3 L602.0 172.2 L597.0 172.1 Z" fill="#000" filter="url(#inner1)"/>
<path d="M592.0 172.1 L587.0 172.2 L582.0 172.4 L577.0 172.7 L572.1 173.1 L567.1 173.7 L562.2 174.4 L557.2 175.2 L552.3 176.1 L547.4 177.1 L542.6 178.2 L537.7 179.3 L532.9 180.6 L528.1 182.0 L523.3 183.4 L518.5 185.0 L513.8 186.6 L509.1 188.4 L504.5 190.2 L499.8 192.0 L495.2 193.9 L490.6 195.8 L486.0 197.8 L481.4 199.7 L476.7 201.6 L472.1 203.6 L467.6 205.5 L463.0 207.6 L458.6 209.8 L454.2 212.2 L450.0 214.8 L445.8 217.5 L441.8 220.5 L438.0 223.6 L434.3 226.9 L430.7 230.4 L427.3 234.0 L424.0 237.7 L420.8 241.6 L417.8 245.5 L415.0 249.6 L412.3 253.8 L409.8 258.1 L407.5 262.5 L405.4 267.0 L403.5 271.6 L401.8 276.3 L400.1 281.0 L398.6 285.8 L397.2 290.6 L395.9 295.4 L394.6 300.2 L393.4 305.1 L392.2 309.9 L391.1 314.8 L390.1 319.7 L389.0 324.6 L388.0 329.5 L387.1 334.4 L386.1 339.3 L385.1 344.2 L384.1 349.1 L383.1 354.0 L382.0 358.9 L380.9 363.7 L379.9 368.6 L378.8 373.5 L377.8 378.4 L376.8 383.3 L375.9 388.2 L375.0 393.1 L374.2 398.1 L373.4 403.0 L372.6 408.0 L371.9 412.9 L371.3 417.9 L370.7 422.8 L370.2 427.8 L369.7 432.8 L369.2 437.8 L368.9 442.7 L368.6 447.7 L368.3 452.7 L368.2 457.7 L368.1 462.7 L368.0 467.7 L368.0 472.7 L368.0 477.7 L368.2 482.7 L368.3 487.7 L368.5 492.7 L368.8 497.7 L369.1 502.7 L369.5 507.7 L370.0 512.6 L370.5 517.6 L371.1 522.6 L371.7 527.5 L372.4 532.5 L373.1 537.4 L373.9 542.4 L374.7 547.3 L375.6 552.2 L376.5 557.1 L377.5 562.0 L378.5 566.9 L379.7 571.8 L380.9 576.6 L382.2 581.5 L383.5 586.3 L384.9 591.1 L386.4 595.9 L387.9 600.6 L389.3 605.4 L390.8 610.2 L392.2 615.0 L393.6 619.8 L395.0 624.6 L396.3 629.4 L397.6 634.3 L398.9 639.1 L400.2 643.9 L401.5 648.7 L402.9 653.6 L404.2 658.4 L405.7 663.1 L407.1 667.9 L408.6 672.7 L410.2 677.4 L411.8 682.2 L413.5 686.9 L415.3 691.5 L417.3 696.1 L419.3 700.7 L421.5 705.1 L423.8 709.6 L426.2 714.0 L428.7 718.3 L431.3 722.6 L433.9 726.8 L436.7 731.0 L439.5 735.1 L442.4 739.2 L445.3 743.2 L448.4 747.1 L451.6 750.9 L454.9 754.7 L458.3 758.3 L461.8 761.9 L465.4 765.4 L469.0 768.9 L472.6 772.3 L476.3 775.7 L480.0 779.1 L483.7 782.4 L487.5 785.6 L491.3 788.8 L495.2 792.0 L499.2 795.0 L503.2 798.0 L507.2 800.9 L511.4 803.7 L515.6 806.4 L519.9 808.9 L524.2 811.3 L528.7 813.6 L533.2 815.8 L537.7 817.8 L542.4 819.6 L547.1 821.3 L551.8 822.8 L556.6 824.1 L561.5 825.3 L566.3 826.3 L571.2 827.3 L576.2 828.1 L581.1 828.7 L586.1 829.3 L591.0 829.7 L596.0 829.9 L601.0 829.9 L606.0 829.8 L610.9 829.5 L615.9 829.0 L620.8 828.3 L625.7 827.5 L630.6 826.5 L635.5 825.3 L640.2 824.0 L645.0 822.4 L649.7 820.7 L654.3 818.9 L658.8 816.8 L663.3 814.6 L667.6 812.2 L671.9 809.7 L676.1 807.0 L680.3 804.2 L684.3 801.3 L688.3 798.3 L692.2 795.2 L696.1 792.0 L699.9 788.8 L703.7 785.6 L707.6 782.4 L711.4 779.2 L715.3 776.1 L719.2 772.9 L723.1 769.8 L726.9 766.6 L730.6 763.3 L734.2 759.8 L737.8 756.3 L741.2 752.7 L744.5 748.9 L747.6 745.1 L750.7 741.2 L753.6 737.1 L756.4 733.0 L759.1 728.8 L761.6 724.5 L764.0 720.1 L766.4 715.7 L768.6 711.2 L770.7 706.7 L772.7 702.1 L774.6 697.5 L776.5 692.9 L778.3 688.2 L779.9 683.5 L781.6 678.8 L783.1 674.0 L784.7 669.3 L786.2 664.5 L787.8 659.8 L789.4 655.0 L791.0 650.3 L792.6 645.6 L794.2 640.8 L795.7 636.1 L797.3 631.3 L798.8 626.6 L800.3 621.8 L801.7 617.0 L803.0 612.2 L804.3 607.3 L805.5 602.5 L806.7 597.6 L807.9 592.8 L809.1 587.9 L810.3 583.0 L811.4 578.2 L812.6 573.3 L813.8 568.5 L814.9 563.6 L816.0 558.7 L817.1 553.8 L818.2 549.0 L819.1 544.0 L820.0 539.1 L820.8 534.2 L821.5 529.3 L822.2 524.3 L822.8 519.3 L823.3 514.4 L823.8 509.4 L824.2 504.4 L824.5 499.4 L824.8 494.4 L825.1 489.4 L825.3 484.4 L825.4 479.4 L825.5 474.4 L825.5 469.4 L825.5 464.4 L825.4 459.5 L825.2 454.5 L824.9 449.5 L824.6 444.5 L824.1 439.5 L823.6 434.5 L823.0 429.6 L822.3 424.6 L821.5 419.7 L820.7 414.8 L819.9 409.8 L819.0 404.9 L818.1 400.0 L817.1 395.1 L816.1 390.2 L815.0 385.3 L813.9 380.4 L812.8 375.6 L811.6 370.7 L810.4 365.8 L809.2 361.0 L808.1 356.1 L806.9 351.3 L805.8 346.4 L804.7 341.5 L803.7 336.6 L802.7 331.7 L801.7 326.8 L800.8 321.9 L799.8 317.0 L798.9 312.1 L797.9 307.2 L797.0 302.3 L796.0 297.4 L794.9 292.5 L793.8 287.6 L792.5 282.8 L790.9 278.1 L789.2 273.5 L787.2 269.0 L785.0 264.5 L782.6 260.2 L780.0 255.9 L777.3 251.7 L774.5 247.6 L771.5 243.7 L768.3 239.8 L765.0 236.1 L761.5 232.6 L757.9 229.2 L754.1 225.9 L750.3 222.8 L746.3 219.8 L742.2 216.9 L738.0 214.2 L733.8 211.5 L729.5 209.0 L725.1 206.6 L720.8 204.2 L716.4 201.8 L712.0 199.3 L707.7 196.9 L703.3 194.5 L699.0 192.1 L694.5 189.9 L690.0 187.8 L685.4 186.0 L680.7 184.3 L676.0 182.8 L671.2 181.5 L666.3 180.2 L661.5 179.1 L656.6 178.1 L651.7 177.1 L646.8 176.3 L641.8 175.5 L636.9 174.9 L631.9 174.3 L626.9 173.7 L621.9 173.3 L617.0 172.9 L612.0 172.6 L607.0 172.3 L602.0 172.2 L597.0 172.1 Z" fill="#000" filter="url(#inner2)"/>
</g>
<!-- eyes -->
<path d="M449 427 C448 414 468 398 495 396 C517 395 532 408 535 420 C536 430 522 436 495 437 C468 437 450 434 449 427 Z" fill="#5a3430" opacity="0.55" filter="url(#b2)"/>
<path d="M453 426 C452 416 470 402 495 400 C515 399 528 410 531 420 C532 428 520 432 495 433 C470 433 454 432 453 426 Z" fill="url(#scl)"/>
<clipPath id="ecl"><path d="M453 426 C452 416 470 402 495 400 C515 399 528 410 531 420 C532 428 520 432 495 433 C470 433 454 432 453 426 Z"/></clipPath>
<g clip-path="url(#ecl)"><circle cx="494" cy="416.5" r="19.5" fill="url(#iris)"/><circle cx="493" cy="416.5" r="7" fill="#080808"/><rect x="450" y="398" width="85" height="6" fill="#000" opacity="0.18" filter="url(#b2)"/></g>
<path d="M453 426 C452 416 470 402 495 400 C515 399 528 410 531 420" stroke="#2e1c1a" stroke-width="1.8" fill="none"/>
<path d="M659 425 C659 410 678 396 700 395 C724 394 744 408 746 421 C746 431 727 438 700 438 C676 438 659 433 659 425 Z" fill="#5a3430" opacity="0.55" filter="url(#b2)"/>
<path d="M663 424 C663 412 680 400 700 399 C722 398 741 410 742 421 C742 429 725 434 700 434 C678 434 663 430 663 424 Z" fill="url(#scl)"/>
<clipPath id="ecr"><path d="M663 424 C663 412 680 400 700 399 C722 398 741 410 742 421 C742 429 725 434 700 434 C678 434 663 430 663 424 Z"/></clipPath>
<g clip-path="url(#ecr)"><circle cx="700" cy="416.5" r="20" fill="url(#iris)"/><circle cx="700" cy="417.5" r="7" fill="#080808"/><rect x="660" y="397" width="85" height="6" fill="#000" opacity="0.18" filter="url(#b2)"/></g>
<path d="M663 424 C663 412 680 400 700 399 C722 398 741 410 742 421" stroke="#2e1c1a" stroke-width="1.8" fill="none"/>
</svg>

<div class="b" style="left:896px;top:125px;width:266px;height:386px;border:1px solid #dcdcdc;box-sizing:border-box;"></div>
<div class="t" style="left:900px;top:120px;font-size:11px;padding:0 3px;background:#f0f0f0;">Tools</div>
<div class="b" style="left:906px;top:142px;width:246px;height:20px;background:#e1e1e1;border:1px solid #adadad;box-sizing:border-box;"></div>
<div class="t" style="left:906px;width:246px;text-align:center;top:146.9px;font-size:11px;color:#222;transform:scaleX(0.95);transform-origin:50% 0;">Full face camera view</div>
<div class="b" style="left:906px;top:170px;width:119px;height:20px;background:#e1e1e1;border:1px solid #adadad;box-sizing:border-box;"></div>
<div class="t" style="left:906px;width:119px;text-align:center;top:174.9px;font-size:11px;color:#222;transform:scaleX(0.95);transform-origin:50% 0;">Take one shot</div>
<div class="b" style="left:1033px;top:170px;width:119px;height:20px;background:#e1e1e1;border:1px solid #adadad;box-sizing:border-box;"></div>
<div class="t" style="left:1033px;width:119px;text-align:center;top:174.9px;font-size:11px;color:#222;transform:scaleX(0.95);transform-origin:50% 0;">Stereoscopic shot</div>
<div class="b" style="left:906px;top:198px;width:119px;height:20px;background:#e1e1e1;border:1px solid #adadad;box-sizing:border-box;"></div>
<div class="t" style="left:906px;width:119px;text-align:center;top:202.9px;font-size:11px;color:#222;transform:scaleX(0.95);transform-origin:50% 0;">Dir to img</div>
<div class="b" style="left:1033px;top:198px;width:119px;height:20px;background:#e1e1e1;border:1px solid #adadad;box-sizing:border-box;"></div>
<div class="t" style="left:1033px;width:119px;text-align:center;top:202.9px;font-size:11px;color:#222;transform:scaleX(0.95);transform-origin:50% 0;">Images set</div>
<div class="b" style="left:915px;top:235px;width:70px;height:20px;background:#e1e1e1;border:1px solid #adadad;box-sizing:border-box;"></div>
<div class="t" style="left:915px;width:70px;text-align:center;top:239.9px;font-size:11px;color:#222;transform:scaleX(0.95);transform-origin:50% 0;">...</div>
<div class="b" style="left:992px;top:235px;width:152px;height:19px;background:#fff;border:1px solid #7a7a7a;box-sizing:border-box;"></div>
<div class="t" style="left:905px;top:272.9px;font-size:11px;color:#222;transform:scaleX(0.95);transform-origin:0 0;">camera x: 0.000000</div>
<div class="b" style="left:905px;top:297px;width:248px;height:4px;background:#e7e7e7;border-top:1px solid #d6d6d6;border-bottom:1px solid #d6d6d6;box-sizing:border-box;"></div>
<div class="b" style="left:1024px;top:289px;width:10px;height:20px;background:#0078d7;"></div>
<div class="t" style="left:905px;top:317.9px;font-size:11px;color:#222;transform:scaleX(0.95);transform-origin:0 0;">camera y: 0.200000</div>
<div class="b" style="left:905px;top:342px;width:248px;height:4px;background:#e7e7e7;border-top:1px solid #d6d6d6;border-bottom:1px solid #d6d6d6;box-sizing:border-box;"></div>
<div class="b" style="left:1047px;top:334px;width:10px;height:20px;background:#0078d7;"></div>
<div class="t" style="left:905px;top:362.9px;font-size:11px;color:#222;transform:scaleX(0.95);transform-origin:0 0;">Zoom: 9.000000</div>
<div class="b" style="left:905px;top:387.5px;width:248px;height:4.0px;background:#e7e7e7;border-top:1px solid #d6d6d6;border-bottom:1px solid #d6d6d6;box-sizing:border-box;"></div>
<div class="b" style="left:1142px;top:379.5px;width:10px;height:20.0px;background:#0078d7;"></div>
<div class="t" style="left:905px;top:408.4px;font-size:11px;color:#222;transform:scaleX(0.95);transform-origin:0 0;">rotation z: 0.000000</div>
<div class="b" style="left:905px;top:433px;width:248px;height:4px;background:#e7e7e7;border-top:1px solid #d6d6d6;border-bottom:1px solid #d6d6d6;box-sizing:border-box;"></div>
<div class="b" style="left:1024px;top:425px;width:10px;height:20px;background:#0078d7;"></div>
<div class="b" style="left:906px;top:454px;width:246px;height:20px;background:#e1e1e1;border:1px solid #adadad;box-sizing:border-box;"></div>
<div class="t" style="left:906px;width:246px;text-align:center;top:458.9px;font-size:11px;color:#222;transform:scaleX(0.95);transform-origin:50% 0;">Reset Facial Code</div>
<div class="b" style="left:906px;top:482px;width:246px;height:20px;background:#e1e1e1;border:1px solid #adadad;box-sizing:border-box;"></div>
<div class="t" style="left:906px;width:246px;text-align:center;top:486.9px;font-size:11px;color:#222;transform:scaleX(0.95);transform-origin:50% 0;">Full set generation</div>
<div class="b" style="left:896px;top:525px;width:266px;height:348px;border:1px solid #dcdcdc;box-sizing:border-box;"></div>
<div class="t" style="left:901px;top:520px;font-size:11px;padding:0 3px;background:#f0f0f0;">Action Units coding</div>
<div class="t" style="left:905px;top:541.9px;font-size:11px;color:#222;transform:scaleX(0.95);transform-origin:0 0;">General Intensity : 100%</div>
<div class="b" style="left:905px;top:567px;width:248px;height:4px;background:#e7e7e7;border-top:1px solid #d6d6d6;border-bottom:1px solid #d6d6d6;box-sizing:border-box;"></div>
<div class="b" style="left:1142px;top:559px;width:10px;height:20px;background:#0078d7;"></div>
<div class="t" style="left:905px;top:587.4px;font-size:11px;color:#222;transform:scaleX(0.95);transform-origin:0 0;">- New facial code -</div>
<div class="b" style="left:906px;top:605.5px;width:119px;height:20.0px;background:#e1e1e1;border:1px solid #adadad;box-sizing:border-box;"></div>
<div class="t" style="left:906px;width:119px;text-align:center;top:610.4px;font-size:11px;color:#222;transform:scaleX(0.95);transform-origin:50% 0;">Load FACS Code</div>
<div class="b" style="left:1033px;top:605.5px;width:119px;height:20.0px;background:#e1e1e1;border:1px solid #adadad;box-sizing:border-box;"></div>
<div class="t" style="left:1033px;width:119px;text-align:center;top:610.4px;font-size:11px;color:#222;transform:scaleX(0.95);transform-origin:50% 0;">Save FACS Code</div>
<div class="b" style="left:906px;top:634px;width:246px;height:20px;background:#e1e1e1;border:1px solid #adadad;box-sizing:border-box;"></div>
<div class="t" style="left:906px;width:246px;text-align:center;top:638.9px;font-size:11px;color:#222;transform:scaleX(0.95);transform-origin:50% 0;">Get AU&#8217;s Code</div>
<div class="t" style="left:905px;top:661.9px;font-size:11px;color:#222;transform:scaleX(0.95);transform-origin:0 0;">AU&#8217;s code generated :</div>
<div class="b" style="left:905px;top:679px;width:248px;height:186px;background:#fff;border:1px solid #828282;box-sizing:border-box;"></div>
<div class="t" style="left:909px;top:685.4px;font-size:11px;color:#222;transform:scaleX(0.95);transform-origin:0 0;">Neutral</div>
<div class="b" style="left:896px;top:887px;width:266px;height:73px;border:1px solid #dcdcdc;box-sizing:border-box;"></div>
<div class="t" style="left:901px;top:882px;font-size:11px;padding:0 3px;background:#f0f0f0;">Images set creation</div>
<div class="t" style="left:905px;top:904.4px;font-size:11px;color:#222;transform:scaleX(0.95);transform-origin:0 0;">Number of images to generate</div>
<div class="b" style="left:905px;top:921px;width:248px;height:20px;background:#fff;border:1px solid #7a7a7a;box-sizing:border-box;"></div>
<div class="t" style="left:909px;top:925.9px;font-size:11px;color:#222;transform:scaleX(0.95);transform-origin:0 0;">25</div>
<div class="b" style="left:896px;top:943px;width:280px;height:58px;background:#f0f0f0;"></div>
<div class="b" style="left:1177px;top:110px;width:16px;height:833px;background:#f0f0f0;"></div>
<div class="b" style="left:1178px;top:128px;width:14px;height:462px;background:#cdcdcd;"></div>
<svg class="b" style="left:1180px;top:115px" width="11" height="9"><path d="M1.5 6.5 L5.5 2.5 L9.5 6.5" fill="none" stroke="#606060" stroke-width="1.6"/></svg>
<svg class="b" style="left:1180px;top:931px" width="11" height="9"><path d="M1.5 2.5 L5.5 6.5 L9.5 2.5" fill="none" stroke="#606060" stroke-width="1.6"/></svg>
<div class="b" style="left:9px;top:953px;width:1142px;height:20px;background:#e6e6e6;border:1px solid #bcbcbc;box-sizing:border-box;"></div>
<div class="t" style="left:3px;top:987.1px;font-size:11.3px;color:#222;">Camera updated</div>
<div class="b" style="left:1175px;top:985px;width:1px;height:13px;background:#d0d0d0;"></div>
<div class="b" style="left:0px;top:1px;width:1194px;height:1px;background:#7fcfcb;"></div>
<div class="b" style="left:1193px;top:1px;width:1px;height:1001px;background:#7fcfcb;"></div>
<div class="b" style="left:0px;top:1001px;width:1194px;height:1px;background:#7fcfcb;"></div>
<svg class="b" style="left:0px;top:31px" width="760" height="32" viewBox="0 31 760 32">
<defs>
<linearGradient id="gw" x1="0" y1="0" x2="1" y2="1"><stop offset="0" stop-color="#ffffff"/><stop offset="1" stop-color="#9a9a9a"/></linearGradient>
<radialGradient id="gh" cx="0.65" cy="0.25" r="0.85"><stop offset="0" stop-color="#ffffff"/><stop offset="0.15" stop-color="#bdbdbd"/><stop offset="0.6" stop-color="#8a8a8a"/><stop offset="1" stop-color="#555"/></radialGradient>
<radialGradient id="gh2" cx="0.35" cy="0.25" r="0.85"><stop offset="0" stop-color="#ffffff"/><stop offset="0.15" stop-color="#bdbdbd"/><stop offset="0.6" stop-color="#8a8a8a"/><stop offset="1" stop-color="#555"/></radialGradient>
<linearGradient id="gs" x1="0" y1="0" x2="1" y2="0"><stop offset="0" stop-color="#e8e8e8"/><stop offset="0.5" stop-color="#6a6a6a"/><stop offset="1" stop-color="#9a9a9a"/></linearGradient>
<pattern id="grip" x="0" y="0" width="3" height="3.6" patternUnits="userSpaceOnUse"><rect x="0.5" y="0.5" width="1.6" height="1.6" fill="#a8a8a8"/></pattern>
</defs>
<!-- grips -->
<rect x="4.2" y="36.0" width="1.6" height="1.6" fill="#a0a0a0"/><rect x="4.2" y="39.6" width="1.6" height="1.6" fill="#a0a0a0"/><rect x="4.2" y="43.2" width="1.6" height="1.6" fill="#a0a0a0"/><rect x="4.2" y="46.8" width="1.6" height="1.6" fill="#a0a0a0"/><rect x="4.2" y="50.4" width="1.6" height="1.6" fill="#a0a0a0"/><rect x="4.2" y="54.0" width="1.6" height="1.6" fill="#a0a0a0"/><rect x="4.2" y="57.6" width="1.6" height="1.6" fill="#a0a0a0"/>
<rect x="105.2" y="36.0" width="1.6" height="1.6" fill="#a0a0a0"/><rect x="105.2" y="39.6" width="1.6" height="1.6" fill="#a0a0a0"/><rect x="105.2" y="43.2" width="1.6" height="1.6" fill="#a0a0a0"/><rect x="105.2" y="46.8" width="1.6" height="1.6" fill="#a0a0a0"/><rect x="105.2" y="50.4" width="1.6" height="1.6" fill="#a0a0a0"/><rect x="105.2" y="54.0" width="1.6" height="1.6" fill="#a0a0a0"/><rect x="105.2" y="57.6" width="1.6" height="1.6" fill="#a0a0a0"/>
<rect x="206.2" y="36.0" width="1.6" height="1.6" fill="#a0a0a0"/><rect x="206.2" y="39.6" width="1.6" height="1.6" fill="#a0a0a0"/><rect x="206.2" y="43.2" width="1.6" height="1.6" fill="#a0a0a0"/><rect x="206.2" y="46.8" width="1.6" height="1.6" fill="#a0a0a0"/><rect x="206.2" y="50.4" width="1.6" height="1.6" fill="#a0a0a0"/><rect x="206.2" y="54.0" width="1.6" height="1.6" fill="#a0a0a0"/><rect x="206.2" y="57.6" width="1.6" height="1.6" fill="#a0a0a0"/>
<rect x="368.2" y="36.0" width="1.6" height="1.6" fill="#a0a0a0"/><rect x="368.2" y="39.6" width="1.6" height="1.6" fill="#a0a0a0"/><rect x="368.2" y="43.2" width="1.6" height="1.6" fill="#a0a0a0"/><rect x="368.2" y="46.8" width="1.6" height="1.6" fill="#a0a0a0"/><rect x="368.2" y="50.4" width="1.6" height="1.6" fill="#a0a0a0"/><rect x="368.2" y="54.0" width="1.6" height="1.6" fill="#a0a0a0"/><rect x="368.2" y="57.6" width="1.6" height="1.6" fill="#a0a0a0"/>
<rect x="470.2" y="36.0" width="1.6" height="1.6" fill="#a0a0a0"/><rect x="470.2" y="39.6" width="1.6" height="1.6" fill="#a0a0a0"/><rect x="470.2" y="43.2" width="1.6" height="1.6" fill="#a0a0a0"/><rect x="470.2" y="46.8" width="1.6" height="1.6" fill="#a0a0a0"/><rect x="470.2" y="50.4" width="1.6" height="1.6" fill="#a0a0a0"/><rect x="470.2" y="54.0" width="1.6" height="1.6" fill="#a0a0a0"/><rect x="470.2" y="57.6" width="1.6" height="1.6" fill="#a0a0a0"/>
<rect x="691.2" y="36.0" width="1.6" height="1.6" fill="#a0a0a0"/><rect x="691.2" y="39.6" width="1.6" height="1.6" fill="#a0a0a0"/><rect x="691.2" y="43.2" width="1.6" height="1.6" fill="#a0a0a0"/><rect x="691.2" y="46.8" width="1.6" height="1.6" fill="#a0a0a0"/><rect x="691.2" y="50.4" width="1.6" height="1.6" fill="#a0a0a0"/><rect x="691.2" y="54.0" width="1.6" height="1.6" fill="#a0a0a0"/><rect x="691.2" y="57.6" width="1.6" height="1.6" fill="#a0a0a0"/>
<!-- separators -->
<g fill="#d6d6d6"><rect x="100.5" y="31" width="1" height="31"/><rect x="202" y="31" width="1" height="31"/><rect x="363.5" y="31" width="1" height="31"/><rect x="465.5" y="31" width="1" height="31"/><rect x="686.5" y="31" width="1" height="31"/></g>
<!-- open -->
<path d="M16 44 C17 41 19 40.5 22 40.5 L30 40.5 C33 40.5 33.5 42 33.5 45 L33.5 51 C33.5 54 32 54.5 29 54.5 L21 54.5 C18 54.5 17.5 53.5 16.5 51 L14.5 47 C14 45.5 15 45 16 44 Z" fill="url(#gw)" stroke="#4a4a4a" stroke-width="1.6"/>
<path d="M17 42 L31 42" stroke="#3a3a3a" stroke-width="2"/>
<!-- save -->
<rect x="45.5" y="39.5" width="17" height="15.5" rx="2.5" fill="#f4f4f4" stroke="#3a3a3a" stroke-width="1.8"/>
<rect x="48.5" y="39" width="11" height="7" fill="#000"/>
<!-- export -->
<rect x="76" y="39.5" width="16" height="15.5" rx="2.5" fill="#f4f4f4" stroke="#3a3a3a" stroke-width="1.8"/>
<rect x="78" y="39" width="12" height="6" fill="#000"/>
<path d="M84 40.5 L88.5 46 L86 46 L86 54 L82 54 L82 46 L79.5 46 Z" fill="#e07b30"/>
<!-- undo -->
<path d="M135.5 47 C135 42.5 131.5 40.5 127.5 40.5 C124 40.5 120.5 43 119.5 49" fill="none" stroke="#e07b30" stroke-width="3"/>
<path d="M114.5 46.5 L125 49.5 L116.5 57 Z" fill="#e07b30"/>
<!-- redo -->
<path d="M145.5 47 C146 42.5 149.5 40.5 153.5 40.5 C157 40.5 160.5 43 161.5 49" fill="none" stroke="#b8b8b8" stroke-width="3"/>
<path d="M166.5 46.5 L156 49.5 L164.5 57 Z" fill="#b8b8b8"/>
<!-- reload -->
<path d="M192.5 43 C190 38.5 182 38.5 179 44" fill="none" stroke="#000" stroke-width="2.8"/>
<path d="M175 43 L182.5 44 L177 51 Z" fill="#000"/>
<path d="M179 50.5 C181.5 55.5 190 55.5 192.5 50" fill="none" stroke="#e07b30" stroke-width="2.8"/>
<path d="M196 51.5 L188.5 49.5 L193.5 44 Z" fill="#e07b30"/>
<!-- highlighted buttons -->
<rect x="212.5" y="32.5" width="30" height="28.5" fill="#c9e0ea" stroke="#b4d4e4" stroke-width="1"/>
<rect x="302.5" y="32.5" width="30" height="28.5" fill="#c9e0ea" stroke="#b4d4e4" stroke-width="1"/>
<!-- smooth -->
<path d="M218 45 C218 41 221 41 223 43 C224 41 225 39 226 38.5 L226 42 C230 42 235 43 239 44 C238 50 235 56 229 56 C224 56 221 55 219 58 Z" fill="url(#gs)"/>
<path d="M219 59 C219 55 222 53 225 55 C229 58 234 56 236.5 50 C237.5 47 238.5 45 239 44" fill="none" stroke="#111" stroke-width="1.8"/>
<path d="M218 45 C218 41 221 41 223 43" fill="none" stroke="#333" stroke-width="1"/>
<!-- wireframe -->
<g fill="none" stroke="#222" stroke-width="1">
<path d="M248 57 C248 44 252 37.5 257.5 37.5 C263 37.5 267 44 267 57"/>
<path d="M252 57 C252 45 254 38 257.5 38"/><path d="M257 57 L257.5 38"/><path d="M262 57 C262 45 260.5 38 257.5 38"/>
<path d="M249.5 44 L265.5 44"/><path d="M248.5 49 L266.5 49"/><path d="M248 54 L267 54"/><path d="M252 40 L263 40"/>
</g>
<!-- skeleton -->
<path d="M281 37 C283 38 283 41 285 42 C287 40 290 40 291 42 C293 43 296 43 297 42 L298 44 C295 46 292 47 290 48 L290 51 C293 52 295 54 294 58 L291 58 C291 55 289 54 287 54 C285 55 283 57 281 58 L278 57 C280 55 282 52 284 51 C283 48 281 46 280 43 C279 41 279 38 281 37 Z" fill="#b0b0b0" stroke="#a0a0a0" stroke-width="0.8"/>
<!-- grid -->
<path d="M308 39 L328 37.5 L329 59 L308 57 Z" fill="#5a5a5a"/>
<g stroke="#111" stroke-width="1.6" fill="none">
<path d="M308.5 38 L308.5 59"/><path d="M313 38 L313.5 59"/><path d="M319 38 L319 59"/><path d="M324 37.5 L324.5 59"/><path d="M328.5 37.5 L329 59"/>
<path d="M306.5 42.5 L329 41"/><path d="M306.5 47.5 L329 46.5"/><path d="M306.5 52.5 L329 52.5"/><path d="M306.5 57 L329 58"/>
</g>
<!-- checker -->
<rect x="337" y="37" width="21" height="20.5" fill="#fff" stroke="#333" stroke-width="1"/>
<g fill="#222">
<rect x="342.2" y="37" width="5.2" height="5.1"/><rect x="352.6" y="37" width="5.2" height="5.1"/>
<rect x="337" y="42.1" width="5.2" height="5.1"/><rect x="347.4" y="42.1" width="5.2" height="5.1"/>
<rect x="342.2" y="47.2" width="5.2" height="5.1"/><rect x="352.6" y="47.2" width="5.2" height="5.1"/>
<rect x="337" y="52.3" width="5.2" height="5.2"/><rect x="347.4" y="52.3" width="5.2" height="5.2"/>
</g>
<!-- symmetry -->
<g>
<path d="M386 37 L386 50.5 L377.5 50.5 Z" fill="#a8a8a8" stroke="#888" stroke-width="0.8"/>
<path d="M391 37 L391 50.5 L399.5 50.5 Z" fill="#e8d8c4" stroke="#e07b30" stroke-width="1"/>
<path d="M388 36.5 L388 51 M389.3 36.5 L389.3 51" stroke="#b0b0b0" stroke-width="0.7"/>
<path d="M379 55 L395 55" stroke="#222" stroke-width="1.4"/><path d="M399 55 L393.5 52 L393.5 58 Z" fill="#000"/>
<path d="M416 37 L416 50.5 L407.5 50.5 Z" fill="#e8d8c4" stroke="#e07b30" stroke-width="1"/>
<path d="M421 37 L421 50.5 L429.5 50.5 Z" fill="#a8a8a8" stroke="#888" stroke-width="0.8"/>
<path d="M418 36.5 L418 51 M419.3 36.5 L419.3 51" stroke="#b0b0b0" stroke-width="0.7"/>
<path d="M413 55 L429 55" stroke="#222" stroke-width="1.4"/><path d="M408 55 L413.5 52 L413.5 58 Z" fill="#000"/>
<path d="M446 37 L446 50.5 L437.5 50.5 Z" fill="#e8d8c4" stroke="#e07b30" stroke-width="1"/>
<path d="M451 37 L451 50.5 L459.5 50.5 Z" fill="#e8d8c4" stroke="#e07b30" stroke-width="1"/>
<path d="M448 36.5 L448 51 M449.3 36.5 L449.3 51" stroke="#b0b0b0" stroke-width="0.7"/>
<path d="M442 55 L455 55" stroke="#222" stroke-width="1.4"/><path d="M438 55 L443.5 52 L443.5 58 Z" fill="#000"/><path d="M459.5 55 L454 52 L454 58 Z" fill="#000"/>
</g>
<!-- heads -->
<ellipse cx="489.7" cy="47" rx="8.3" ry="10.5" fill="url(#gh)" stroke="#3c3c3c" stroke-width="1.3"/>
<ellipse cx="486.5" cy="45" rx="1.8" ry="1" fill="#333"/><ellipse cx="493" cy="45" rx="1.8" ry="1" fill="#333"/><ellipse cx="489.8" cy="53" rx="1.5" ry="0.8" fill="#333"/>
<ellipse cx="519.7" cy="47" rx="8" ry="10.5" fill="url(#gh)" stroke="#3c3c3c" stroke-width="1.3"/>
<path d="M540 45 C539 40 543 37 549 37 C554 37 557 40 557 43 L560.5 47 L557 48 C557 52 559 56 556 57.5 C552 58 549 56 546 53 C543 51 541 49 540 45 Z" fill="url(#gh2)" stroke="#3c3c3c" stroke-width="1.3"/>
<path d="M590 45 C591 40 587 37 581 37 C576 37 573 40 573 43 L569.5 47 L573 48 C573 52 571 56 574 57.5 C578 58 581 56 584 53 C587 51 589 49 590 45 Z" fill="url(#gh)" stroke="#3c3c3c" stroke-width="1.3"/>
<path d="M599 43 C599 38.5 604 37.5 610 37.5 C616 37.5 621 38.5 621 43 C621 51 616 57.5 610 57.5 C604 57.5 599 51 599 43 Z" fill="#3c3c3c"/>
<ellipse cx="610" cy="47" rx="7.3" ry="8.5" fill="url(#gh)"/>
<path d="M630 45 C629 39 632 36.5 635 36.5 C638 36.5 639 39 639 41 L641 41 C641 39 642 36.5 645 36.5 C648 36.5 651 39 650.5 45 C652 49 652 55 648 57 C645 58 642 56 641 54 L639 54 C638 56 635 58 632 57 C628 55 628 49 630 45 Z" fill="url(#gs)" stroke="#3c3c3c" stroke-width="1.3"/>
<path d="M638.5 42 L641.5 42 L641.5 54 L638.5 54 Z" fill="#3c3c3c"/>
<circle cx="670" cy="47" r="8.3" fill="none" stroke="#3c3c3c" stroke-width="1.5"/>
<g fill="#111"><path d="M658.5 36 L663 36 L658.5 40 Z"/><path d="M681.5 36 L677 36 L681.5 40 Z"/><path d="M658.5 58.5 L663 58.5 L658.5 54.5 Z"/><path d="M681.5 58.5 L677 58.5 L681.5 54.5 Z"/></g>
<!-- camera -->
<rect x="701" y="42.5" width="21.5" height="14" rx="2" fill="#f4f4f4" stroke="#333" stroke-width="1.6"/>
<circle cx="711" cy="49.5" r="5.5" fill="#a8a8a8" stroke="#222" stroke-width="1.6"/>
<circle cx="719.5" cy="40.5" r="1" fill="#777"/>
</svg>
<div class="t" style="left:734.5px;top:34px;font-size:24px;font-weight:bold;color:#000;">?</div>
<svg class="b" style="left:1070px;top:5px" width="120" height="20" viewBox="1070 5 120 20">
<path d="M1077 15.5 L1088.5 15.5" stroke="#222" stroke-width="1"/>
<rect x="1121.5" y="10.5" width="9.5" height="9.5" fill="none" stroke="#222" stroke-width="1"/>
<path d="M1166 10.2 L1176 20.2 M1176 10.2 L1166 20.2" stroke="#222" stroke-width="1"/>
</svg>
<svg class="b" style="left:1180px;top:986px" width="12" height="14">
<g fill="#b0b0b0"><rect x="9" y="3" width="1.2" height="1.2"/><rect x="6.5" y="5.5" width="1.2" height="1.2"/><rect x="9" y="5.5" width="1.2" height="1.2"/><rect x="4" y="8" width="1.2" height="1.2"/><rect x="6.5" y="8" width="1.2" height="1.2"/><rect x="9" y="8" width="1.2" height="1.2"/></g>
</svg>
</body></html>
